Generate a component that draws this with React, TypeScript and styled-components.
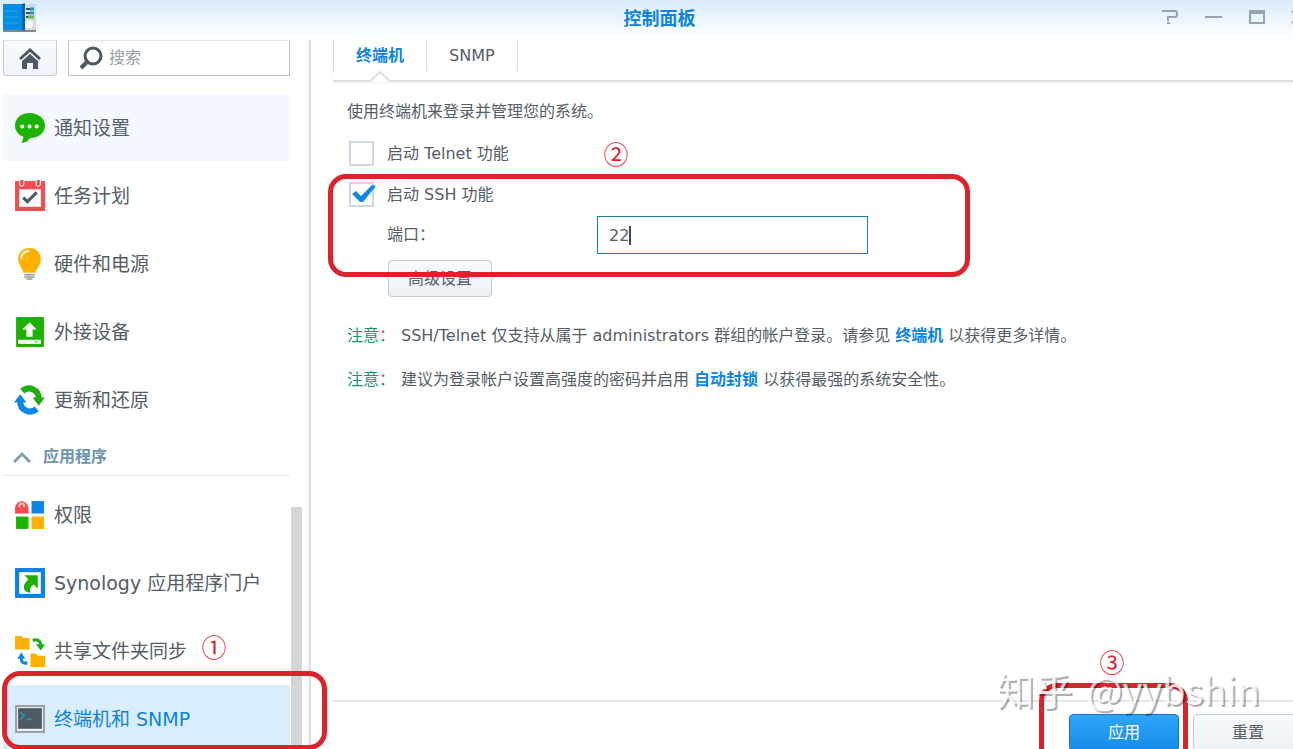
import React, { useState } from 'react';
import styled, { createGlobalStyle } from 'styled-components';

const sans = `"DejaVu Sans", "Noto Sans CJK SC", sans-serif`;
const blue = '#0f84dc';
const ink = '#545d67';
const red = '#dc222b';

const GlobalStyle = createGlobalStyle`
  *, *::before, *::after { box-sizing: border-box; }
  body { margin: 0; background: #fff; overflow: hidden; }
  button, input { font: inherit; color: inherit; }
`;

const Window = styled.div`
  position: relative;
  display: flex;
  flex-direction: column;
  height: 100vh;
  overflow: hidden;
  background: #fff;
  color: ${ink};
  font: 400 16px/24px ${sans};
`;

const TitleBar = styled.header`
  display: grid;
  grid-template-columns: 1fr auto 1fr;
  align-items: start;
  flex: none;
  height: 40px;
  margin-right: -26px;
  padding: 3px 3px 0;
  background: linear-gradient(#d9ebf9, #e8f4fd 40%, #fff);
`;

const Title = styled.h1`
  margin: 4px 0 0;
  color: ${blue};
  font-size: 18px;
  font-weight: 700;
  line-height: 24px;
`;

const WindowControls = styled.div`
  display: flex;
  justify-content: flex-end;
  gap: 19px;
  margin: 2px 4px 0 0;
`;

const ControlButton = styled.button`
  display: flex;
  width: 24px;
  height: 24px;
  padding: 0;
  border: 0;
  background: none;
`;

const Body = styled.div`
  display: flex;
  flex: 1;
  min-height: 0;
`;

const Sidebar = styled.aside`
  display: flex;
  flex-direction: column;
  flex: none;
  width: 311px;
  padding-left: 3px;
  border-right: 2px solid #dfe1e3;
  box-shadow: inset -2px 0 1px #f6f7f8;
`;

const SearchRow = styled.div`
  display: flex;
  flex: none;
  gap: 11px;
  height: 36px;
  margin-right: 19px;
`;

const HomeButton = styled.button`
  display: grid;
  place-items: center;
  flex: none;
  width: 54px;
  padding: 0;
  border: 1px solid #c3cbd4;
  border-top-color: #e2e7ec;
  border-radius: 0 0 4px 4px;
  background: linear-gradient(#f9fbfd, #f0f4f9);
`;

const SearchField = styled.label`
  display: flex;
  align-items: center;
  flex: 1;
  gap: 6px;
  min-width: 0;
  padding-left: 10px;
  border: 1px solid #bcc5ce;
  border-top-color: #e2e7ec;
`;

const SearchInput = styled.input`
  flex: 1;
  min-width: 0;
  padding: 0;
  border: 0;
  outline: 0;
  background: none;
  &::placeholder { color: #969da4; opacity: 1; }
`;

const Scroller = styled.div`
  display: flex;
  flex: 1;
  gap: 1px;
  min-height: 0;
  margin-top: 18px;
`;

const Nav = styled.nav`
  flex: none;
  width: 287px;
  overflow: hidden;
`;

const Scrollbar = styled.div`
  align-self: flex-end;
  width: 11px;
  height: 37%;
  background: #d4d5d6;
`;

const NavList = styled.ul`
  display: flex;
  flex-direction: column;
  gap: 1px;
  margin: 0;
  padding: 0;
  list-style: none;
`;

const NavLink = styled.a<{ $state?: 'hover' | 'active' }>`
  display: flex;
  align-items: center;
  gap: 8px;
  height: 67px;
  padding-left: 11px;
  background: ${p => (p.$state === 'active' ? '#d9edfd' : p.$state === 'hover' ? '#f3f9fe' : 'transparent')};
  color: ${p => (p.$state === 'active' ? blue : ink)};
  font-size: 19px;
  text-decoration: none;
  white-space: nowrap;
`;

const NavSection = styled.button`
  display: flex;
  align-items: center;
  gap: 12px;
  width: 100%;
  height: 43px;
  margin-bottom: 5px;
  padding: 5px 0 0 10px;
  border: 0;
  border-bottom: 1px solid #e4e8eb;
  background: none;
  color: #6c93b0;
  font-weight: 700;
`;

const Main = styled.main`
  display: flex;
  flex-direction: column;
  flex: 1;
  min-width: 0;
  padding-left: 22px;
`;

const Tabs = styled.div`
  display: flex;
  flex: none;
  height: 42px;
  padding-bottom: 9px;
  border-bottom: 2px solid #dcdddf;
  box-shadow: 0 1px 2px #eeeff0;
`;

const Tab = styled.button<{ $selected?: boolean }>`
  position: relative;
  padding: 0 22px;
  border: 0;
  border-right: 1px solid #d9dcdf;
  background: none;
  color: ${p => (p.$selected ? blue : ink)};
  font-weight: ${p => (p.$selected ? 700 : 400)};
  &:first-child { border-left: 1px solid #d9dcdf; }
`;

const Notch = styled.svg`
  position: absolute;
  left: 50%;
  bottom: -11px;
  margin-left: -12px;
`;

const Panel = styled.form`
  display: flex;
  flex-direction: column;
  flex: 1;
  align-items: flex-start;
  min-height: 0;
  padding: 18px 14px 0;
`;

const Intro = styled.p`
  margin: 0 0 17px;
`;

const CheckLabel = styled.label`
  display: flex;
  align-items: center;
  gap: 13px;
  height: 25px;
  margin: 0 0 16px 2px;
`;

const CheckBoxFrame = styled.span`
  position: relative;
  width: 25px;
  height: 25px;
`;

const CheckBox = styled.input`
  display: block;
  width: 25px;
  height: 25px;
  margin: 0;
  appearance: none;
  border: 2px solid #ccd8e4;
  background: #fff;
  & + svg { display: none; }
  &:checked + svg { display: block; }
`;

const CheckMark = styled.svg`
  position: absolute;
  top: 2px;
  left: 2px;
  pointer-events: none;
`;

const PortRow = styled.div`
  display: flex;
  align-items: center;
  margin: -7px 0 6px 40px;
`;

const PortLabel = styled.label`
  width: 210px;
`;

const PortField = styled.div`
  position: relative;
`;

const PortInput = styled.input`
  display: block;
  width: 271px;
  height: 38px;
  padding: 0 11px;
  border: 1px solid #1c8299;
  outline: 0;
  caret-color: transparent;
`;

const Caret = styled.span`
  position: absolute;
  top: 10px;
  left: 32px;
  width: 2px;
  height: 19px;
  background: #454a50;
`;

const Button = styled.button<{ $primary?: boolean; $width: number }>`
  flex: none;
  width: ${p => p.$width}px;
  height: 37px;
  padding: 0;
  border: 1px solid ${p => (p.$primary ? '#1878c8' : '#c4cdd6')};
  border-radius: 4px;
  background: ${p => (p.$primary ? 'linear-gradient(#2fa6fb, #148be6)' : 'linear-gradient(#f8fafc, #edf1f6)')};
  color: ${p => (p.$primary ? '#fff' : ink)};
`;

const Advanced = styled.div`
  margin: 0 0 27px 41px;
`;

const Note = styled.p`
  display: flex;
  margin: 0 0 20px;
`;

const NoteTag = styled.span`
  flex: none;
  width: 54px;
  color: #12966c;
`;

const NoteLink = styled.a`
  color: ${blue};
  font-weight: 700;
  text-decoration: none;
`;

const Footer = styled.footer`
  display: flex;
  flex: none;
  justify-content: flex-end;
  height: 49px;
  padding-top: 12px;
  border-top: 2px solid #e3e4e5;
`;

const FooterButtons = styled.div`
  display: flex;
  gap: 14px;
  margin-right: -10px;
`;

const side = (value?: number) => (value === undefined ? 'auto' : `${value}px`);

type Spot = { $left?: number; $right?: number; $top?: number; $bottom?: number };

const Marker = styled.div<Spot & { $width: number; $height: number }>`
  position: absolute;
  left: ${p => side(p.$left)};
  right: ${p => side(p.$right)};
  top: ${p => side(p.$top)};
  bottom: ${p => side(p.$bottom)};
  width: ${p => p.$width}px;
  height: ${p => p.$height}px;
  border: 5px solid ${red};
  border-radius: 18px;
  pointer-events: none;
`;

const Step = styled.span<Spot>`
  position: absolute;
  left: ${p => side(p.$left)};
  right: ${p => side(p.$right)};
  top: ${p => side(p.$top)};
  bottom: ${p => side(p.$bottom)};
  width: 26px;
  color: ${red};
  font: 400 25px/26px "Noto Sans CJK SC", sans-serif;
  text-align: center;
  pointer-events: none;
`;

const Watermark = styled.span`
  position: absolute;
  right: 33px;
  bottom: 41px;
  display: flex;
  gap: 14px;
  color: rgba(255, 255, 255, 0.85);
  font: 400 38px/38px "Noto Sans CJK SC", sans-serif;
  text-shadow: 2px 2px 0 rgba(0, 0, 0, 0.32);
  white-space: nowrap;
  pointer-events: none;
`;

const AppIcon = () => (
  <svg width="34" height="29" viewBox="0 0 34 29">
    <rect x="18" y="1" width="15" height="27" fill="#d3dae0" />
    <path d="M0 27h33v2H0z" fill="#8d8579" />
    <path d="M0 1h19v26H0z" fill="#078ce4" />
    <path d="M19 1l3-1v28l-3-1z" fill="#0767a8" />
    <path d="M2 8h13M2 14h13M2 20h13" stroke="#27a9e8" strokeWidth="1" />
    <path d="M23 6h4M23 10h4M23 14h3" stroke="#3d4c57" strokeWidth="2" />
    <path d="M27 6h4M27 10h4" stroke="#1a9ade" strokeWidth="3" />
    <path d="M25 14h6" stroke="#63b944" strokeWidth="3" />
    <circle cx="26" cy="21" r="4" fill="#fff" />
  </svg>
);

const icons: Record<string, React.ReactNode> = {
  notify: (
    <>
      <path d="M15 1C7 1 1 6 1 13c0 5 3 9 8 11 0 3-1 5-2 6 4 0 7-2 9-5 8 0 14-5 14-12S23 1 15 1z" fill="#1db100" />
      <circle cx="8" cy="14" r="2" fill="#fff" />
      <circle cx="15" cy="14" r="2" fill="#fff" />
      <circle cx="22" cy="14" r="2" fill="#fff" />
    </>
  ),
  task: (
    <>
      <path d="M1 1h29v29H1z" fill="#f04e50" />
      <path d="M5 9h21v17H5z" fill="#fff" />
      <path d="M5 0v4c0 3 5 3 5 0V0zM21 0v4c0 3 5 3 5 0V0z" fill="#fff" />
      <path d="M6 0v4c0 2 3 2 3 0V0zM22 0v4c0 2 3 2 3 0V0z" fill="#f04e50" />
      <path d="M9 17l4 4 9-9" fill="none" stroke="#4b5a67" strokeWidth="3" />
    </>
  ),
  bulb: (
    <>
      <path d="M15 0C8 0 4 5 4 11c0 5 4 8 5 13h12c1-5 5-8 5-13 0-6-4-11-11-11z" fill="#ffb100" />
      <path d="M7 10c0-4 3-7 7-7" fill="none" stroke="#fff3c9" strokeWidth="2" strokeLinecap="round" />
      <path d="M10 26h10M10 28h10M12 30h6" stroke="#98999b" strokeWidth="1.4" />
    </>
  ),
  external: (
    <>
      <rect x="2" y="1" width="27" height="29" rx="1" fill="#1db100" />
      <path d="M15 6l7 7h-4v7h-6v-7H8z" fill="#fff" />
      <path d="M4 23h22v4H4z" fill="#fff" />
      <path d="M20 25h3" stroke="#9bd48c" strokeWidth="2" />
    </>
  ),
  update: (
    <>
      <path d="M8 7c7-6 16-1 16 7" fill="none" stroke="#1fae12" strokeWidth="6" />
      <path d="M18 13h12l-6 8z" fill="#1fae12" />
      <path d="M22 24c-7 6-16 1-16-7" fill="none" stroke="#0c86e4" strokeWidth="6" />
      <path d="M0 18h12L6 10z" fill="#0c86e4" />
    </>
  ),
  rights: (
    <>
      <path d="M1 14V9c1-9 12-9 13 0v5z" fill="#f34b50" />
      <path d="M5 8c0-5 5-5 5 0" fill="none" stroke="#ffc0bd" strokeWidth="2" />
      <path d="M17 2h12v12H17z" fill="#0a84e5" />
      <path d="M2 17h12v12H2z" fill="#1db100" />
      <path d="M17 17h12v12H17z" fill="#ffb100" />
    </>
  ),
  portal: (
    <>
      <path d="M1 1h29v29H1z" fill="#0b82df" />
      <path d="M5 5h21v21H5z" fill="#fff" />
      <path d="M10 8h13v13l-4-4c-3 2-4 4-3 8l-4-1c-4-3-3-8 2-12z" fill="#1db100" />
    </>
  ),
  sync: (
    <>
      <path d="M1 1h6l2 2h6v11H1zM16 18h5l2 2h7v11H16z" fill="#ffb100" />
      <path d="M18 5c6-1 8 1 8 6" fill="none" stroke="#24ac20" strokeWidth="3" />
      <path d="M21 9h9l-4 6z" fill="#24ac20" />
      <path d="M13 27c-5 1-6-1-6-5" fill="none" stroke="#1184de" strokeWidth="3" />
      <path d="M3 23h8l-4-6z" fill="#1184de" />
    </>
  ),
  terminal: (
    <>
      <path d="M1 2h29v27H1z" fill="#9a9fa3" />
      <path d="M3 4h25v23H3z" fill="#f3f5f6" />
      <path d="M4 5h23v20H4z" fill="#4d5963" />
      <path d="M6 9l4 3-4 4M12 16h5" fill="none" stroke="#22a5a2" strokeWidth="1.5" />
    </>
  ),
};

const NavIcon = ({ name }: { name: string }) => (
  <svg width="32" height="32" viewBox="0 0 31 31">{icons[name]}</svg>
);

type Item = { icon: string; label: string; state?: 'hover' | 'active' };

const systemItems: Item[] = [
  { icon: 'notify', label: '通知设置', state: 'hover' },
  { icon: 'task', label: '任务计划' },
  { icon: 'bulb', label: '硬件和电源' },
  { icon: 'external', label: '外接设备' },
  { icon: 'update', label: '更新和还原' },
];

const appItems: Item[] = [
  { icon: 'rights', label: '权限' },
  { icon: 'portal', label: 'Synology 应用程序门户' },
  { icon: 'sync', label: '共享文件夹同步' },
  { icon: 'terminal', label: '终端机和 SNMP', state: 'active' },
];

const Items = ({ items }: { items: Item[] }) => (
  <NavList>
    {items.map(item => (
      <li key={item.label}>
        <NavLink href="#" $state={item.state}>
          <NavIcon name={item.icon} />
          {item.label}
        </NavLink>
      </li>
    ))}
  </NavList>
);

const Check = ({ label, initial = false }: { label: string; initial?: boolean }) => {
  const [checked, setChecked] = useState(initial);
  return (
    <CheckLabel>
      <CheckBoxFrame>
        <CheckBox type="checkbox" checked={checked} onChange={e => setChecked(e.target.checked)} />
        <CheckMark width="26" height="20" viewBox="0 0 26 20">
          <path d="M1 10l4-3 5 5L21 1l4 1-13 16h-3z" fill="#1289e2" />
        </CheckMark>
      </CheckBoxFrame>
      {label}
    </CheckLabel>
  );
};

export default function App() {
  return (
    <>
      <GlobalStyle />
      <Window>
        <TitleBar>
          <AppIcon />
          <Title>控制面板</Title>
          <WindowControls>
            <ControlButton aria-label="帮助">
              <svg width="24" height="24" viewBox="0 0 24 24" fill="none" stroke="#98a3ad" strokeWidth="2">
                <path d="M3 6h13q2 0 2 2v1q0 3-2 3H9v4M8 18h3" />
              </svg>
            </ControlButton>
            <ControlButton aria-label="最小化">
              <svg width="24" height="24" viewBox="0 0 24 24" stroke="#98a3ad" strokeWidth="2">
                <path d="M3 12h17" />
              </svg>
            </ControlButton>
            <ControlButton aria-label="最大化">
              <svg width="24" height="24" viewBox="0 0 24 24" fill="none" stroke="#98a3ad" strokeWidth="2">
                <path d="M5 6h14v12H5zM5 8h14" />
              </svg>
            </ControlButton>
            <ControlButton aria-label="关闭">
              <svg width="24" height="24" viewBox="0 0 24 24" stroke="#98a3ad" strokeWidth="2">
                <path d="M4 6l13 12M17 6L4 18" />
              </svg>
            </ControlButton>
          </WindowControls>
        </TitleBar>
        <Body>
          <Sidebar>
            <SearchRow>
              <HomeButton aria-label="主页">
                <svg width="22" height="22" viewBox="0 0 22 22">
                  <path d="M1 12L11 3l10 9" fill="none" stroke="#4d5863" strokeWidth="3" />
                  <path d="M3 14l8-7 8 7v8h-5v-6H8v6H3z" fill="#4d5863" />
                </svg>
              </HomeButton>
              <SearchField>
                <svg width="24" height="24" viewBox="0 0 24 24" fill="none" stroke="#4d5863">
                  <circle cx="14" cy="10" r="8" strokeWidth="3" />
                  <path d="M8 16l-6 6" strokeWidth="4" />
                </svg>
                <SearchInput placeholder="搜索" aria-label="搜索" />
              </SearchField>
            </SearchRow>
            <Scroller>
              <Nav>
                <Items items={systemItems} />
                <NavSection>
                  <svg width="18" height="12" viewBox="0 0 18 12" fill="none" stroke="#7f9db3" strokeWidth="3">
                    <path d="M1 11l8-8 8 8" />
                  </svg>
                  应用程序
                </NavSection>
                <Items items={appItems} />
              </Nav>
              <Scrollbar />
            </Scroller>
          </Sidebar>
          <Main>
            <Tabs role="tablist">
              <Tab role="tab" aria-selected="true" $selected>
                终端机
                <Notch width="24" height="12" viewBox="0 0 24 12">
                  <path d="M2 12L12 2l10 10z" fill="#fff" />
                  <path d="M2 11l10-9 10 9" fill="none" stroke="#dcdddf" strokeWidth="2" />
                </Notch>
              </Tab>
              <Tab role="tab" aria-selected="false">SNMP</Tab>
            </Tabs>
            <Panel onSubmit={e => e.preventDefault()}>
              <Intro>使用终端机来登录并管理您的系统。</Intro>
              <Check label="启动 Telnet 功能" />
              <Check label="启动 SSH 功能" initial />
              <PortRow>
                <PortLabel htmlFor="port">端口：</PortLabel>
                <PortField>
                  <PortInput id="port" defaultValue="22" />
                  <Caret />
                </PortField>
              </PortRow>
              <Advanced>
                <Button type="button" $width={104}>高级设置</Button>
              </Advanced>
              <Note>
                <NoteTag>注意：</NoteTag>
                <span>
                  SSH/Telnet 仅支持从属于 administrators 群组的帐户登录。请参见 <NoteLink href="#">终端机</NoteLink> 以获得更多详情。
                </span>
              </Note>
              <Note>
                <NoteTag>注意：</NoteTag>
                <span>
                  建议为登录帐户设置高强度的密码并启用 <NoteLink href="#">自动封锁</NoteLink> 以获得最强的系统安全性。
                </span>
              </Note>
            </Panel>
            <Footer>
              <FooterButtons>
                <Button $primary $width={110}>应用</Button>
                <Button $width={110}>重置</Button>
              </FooterButtons>
            </Footer>
          </Main>
        </Body>
        <Marker $left={2} $top={671} $width={325} $height={79} />
        <Step $left={201} $top={633}>①</Step>
        <Marker $left={328} $top={174} $width={642} $height={103} />
        <Step $left={603} $top={140}>②</Step>
        <Marker $right={105} $bottom={-30} $width={149} $height={96} />
        <Step $right={168} $bottom={75}>③</Step>
        <Watermark>
          <span>知乎</span>
          <span>@yybshin</span>
        </Watermark>
      </Window>
    </>
  );
}
